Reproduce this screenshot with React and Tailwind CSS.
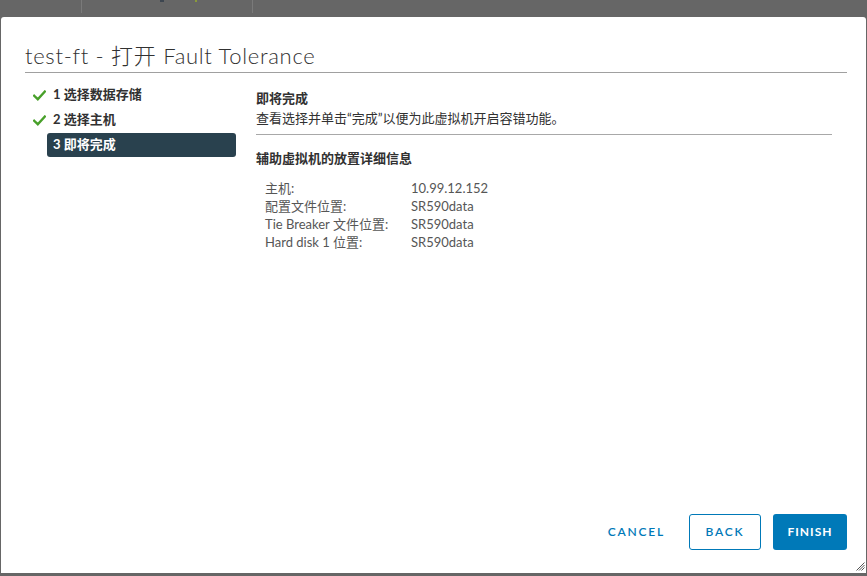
import React from "react";

const FONT = { fontFamily: 'Lato, "Noto Sans CJK SC", "Noto Sans", sans-serif' };

function Check() {
  return (
    <svg width="13" height="11" viewBox="0 0 13 11" className="shrink-0">
      <path d="M1.2 5.8 L4.8 9.2 L11.8 1.6" fill="none" stroke="#48a02a" strokeWidth="2.4" strokeLinecap="square" />
    </svg>
  );
}

function Grip() {
  return (
    <svg width="9" height="9" viewBox="0 0 9 9" className="absolute right-[1px] bottom-[2px]">
      <path d="M8.5 0.5 L0.5 8.5 M8.5 3 L3 8.5 M8.5 5.5 L5.5 8.5" stroke="#555" strokeWidth="1" fill="none" />
    </svg>
  );
}

export default function App() {
  const rows = [
    ["主机:", "10.99.12.152"],
    ["配置文件位置:", "SR590data"],
    ["Tie Breaker 文件位置:", "SR590data"],
    ["Hard disk 1 位置:", "SR590data"],
  ];
  return (
    <div className="w-[867px] h-[576px] bg-[#666666] flex flex-col overflow-hidden" style={FONT}>
      <div className="h-[17px] shrink-0 flex items-start">
        <div className="w-[81px]" />
        <div className="w-px h-[13px] bg-[#7a7a7a]" />
        <div className="w-[78px]" />
        <div className="w-[4px] h-[2px] bg-[#3d4650]" />
        <div className="w-[31px]" />
        <div className="w-[2px] h-[2px] bg-[#8a9a3a]" />
        <div className="w-[55px]" />
        <div className="w-px h-[13px] bg-[#7a7a7a]" />
      </div>
      <div className="flex-1 mx-px mb-[3px] bg-white rounded-t-[3px] flex flex-col pl-6 pr-[19px] pb-[23px] relative">
        <div className="pt-[25px] pb-[2px] border-b border-[#a0a0a0]">
          <div className="text-[22px] leading-[28px] font-light text-[#313131] tracking-[0.7px]">
            test-ft - 打开 Fault Tolerance
          </div>
        </div>
        <div className="flex flex-1">
          <div className="w-[211px] shrink-0 pt-[10px] flex flex-col gap-px">
            <div className="h-6 flex items-center">
              <div className="w-[22px] flex items-center pl-[8px]"><Check /></div>
              <div className="pl-[6px] text-[13px] font-bold text-[#313131]">1 选择数据存储</div>
            </div>
            <div className="h-6 flex items-center">
              <div className="w-[22px] flex items-center pl-[8px]"><Check /></div>
              <div className="pl-[6px] text-[13px] font-bold text-[#313131]">2 选择主机</div>
            </div>
            <div className="h-6 flex items-center">
              <div className="w-[22px]" />
              <div className="flex-1 h-6 flex items-center rounded-[3px] bg-[#29414e] pl-[6px] text-[13px] font-bold text-white">
                3 即将完成
              </div>
            </div>
          </div>
          <div className="ml-5 flex-1 mr-[15px] pt-[15px]">
            <div className="text-[13px] leading-[20px] font-bold text-[#313131]">即将完成</div>
            <div className="text-[13px] leading-[20px] text-[#313131]">
              查看选择并单击“完成”以便为此虚拟机开启容错功能。
            </div>
            <div className="mt-[6px] border-t border-[#a8a8a8]" />
            <div className="mt-[13px] text-[13px] leading-[20px] font-bold text-[#313131]">辅助虚拟机的放置详细信息</div>
            <div className="mt-[12px] pl-[9px] flex flex-col">
              {rows.map(([k, v]) => (
                <div key={k} className="flex h-[18px] items-center text-[13px] text-[#565656]">
                  <div className="w-[146px] shrink-0">{k}</div>
                  <div>{v}</div>
                </div>
              ))}
            </div>
          </div>
        </div>
        <div className="flex justify-end items-center gap-3">
          <button className="h-9 px-3 text-[12px] font-semibold tracking-[1.8px] text-[#0079b8]">CANCEL</button>
          <button className="h-9 w-[72px] border border-[#0079b8] rounded-[3px] text-[12px] font-semibold tracking-[1.8px] text-[#0079b8]">BACK</button>
          <button className="h-9 w-[74px] bg-[#0079b8] rounded-[3px] text-[12px] font-bold tracking-[1px] text-white">FINISH</button>
        </div>
        <Grip />
      </div>
    </div>
  );
}
